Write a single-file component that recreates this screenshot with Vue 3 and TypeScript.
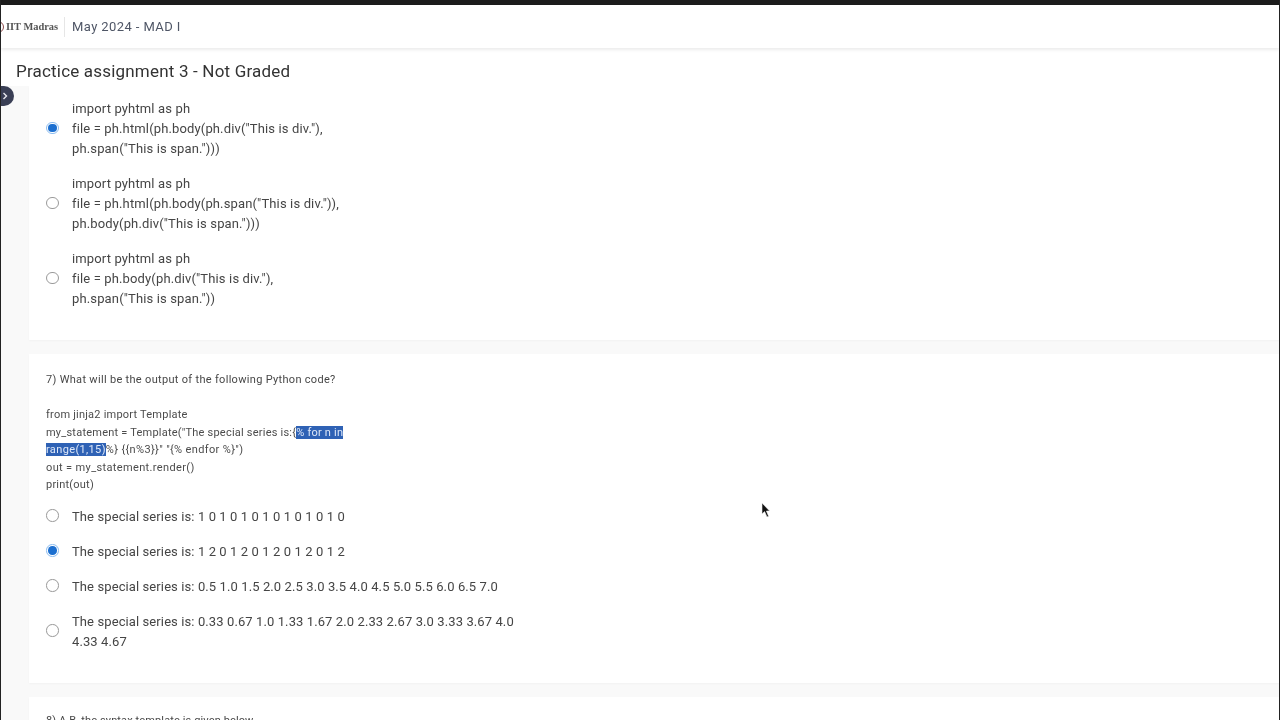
<script setup lang="ts">
interface Option { lines: string[]; checked?: boolean }
const first: Option[] = [
  { checked: true, lines: ['import pyhtml as ph', 'file = ph.html(ph.body(ph.div("This is div."),', 'ph.span("This is span.")))'] },
  { lines: ['import pyhtml as ph', 'file = ph.html(ph.body(ph.span("This is div.")),', 'ph.body(ph.div("This is span.")))'] },
  { lines: ['import pyhtml as ph', 'file = ph.body(ph.div("This is div."),', 'ph.span("This is span."))'] },
]
const second: Option[] = [
  { lines: ['The special series is: 1 0 1 0 1 0 1 0 1 0 1 0 1 0'] },
  { checked: true, lines: ['The special series is: 1 2 0 1 2 0 1 2 0 1 2 0 1 2'] },
  { lines: ['The special series is: 0.5 1.0 1.5 2.0 2.5 3.0 3.5 4.0 4.5 5.0 5.5 6.0 6.5 7.0'] },
  { lines: ['The special series is: 0.33 0.67 1.0 1.33 1.67 2.0 2.33 2.67 3.0 3.33 3.67 4.0', '4.33 4.67'] },
]
const codeTail = '%} {{n%3}}" "{% endfor %}")'
</script>

<template>
  <div class="page">
    <div class="topstrip"></div>
    <header class="header">
      <span class="logo-ring"></span>
      <span class="brand">IIT Madras</span>
      <span class="course">May 2024 - MAD I</span>
    </header>
    <h1 class="title">Practice assignment 3 - Not Graded</h1>
    <button class="toggle" aria-label="Open sidebar">
      <svg width="8" height="8" viewBox="0 0 8 8"><path d="M2.5 1 L5.5 4 L2.5 7" fill="none" stroke="#e8e8ee" stroke-width="1.4" /></svg>
    </button>
    <main class="content">
      <section class="card card-one">
        <div v-for="(o, i) in first" :key="i" class="option three">
          <span class="radio" :class="{ on: o.checked }"></span>
          <div class="label wide"><div v-for="l in o.lines" :key="l">{{ l }}</div></div>
        </div>
      </section>
      <section class="card card-two">
        <p class="question">7) What will be the output of the following Python code?</p>
        <div class="code">
          <div>from jinja2 import Template</div>
          <div>my_statement = Template("The special series is:{<mark>% for n in</mark></div>
          <div class="loose"><mark>range(1,15)</mark>{{ codeTail }}</div>
          <div class="loose">out = my_statement.render()</div>
          <div>print(out)</div>
        </div>
        <div class="answers">
          <div v-for="(o, i) in second" :key="i" class="option">
            <span class="radio" :class="{ on: o.checked }"></span>
            <div class="label"><div v-for="l in o.lines" :key="l">{{ l }}</div></div>
          </div>
        </div>
      </section>
      <section class="card card-three">
        <p class="question tight">8) A B, the syntax template is given below</p>
      </section>
    </main>
    <svg class="cursor" width="10" height="17" viewBox="0 0 10 17"><path d="M1 1 L1 12 L3.6 9.6 L6 15 L7.6 14.2 L5.4 9 L8.6 9 Z" fill="#111" stroke="#eee" stroke-width=".6" /></svg>
  </div>
</template>

<style>
html, body { margin: 0; background: #fff; }
</style>

<style scoped>
.page {
  position: relative;
  width: 1280px;
  height: 720px;
  overflow: hidden;
  background: #f9f9f9;
  border-left: 1px solid #222;
  border-right: 1px solid #222;
  box-sizing: border-box;
  font-family: Roboto, "Liberation Sans", sans-serif;
  color: #3a3a3a;
  filter: blur(0.35px);
}
.topstrip { height: 5px; background: #1c1c1c; }
.header {
  height: 43px;
  display: flex;
  align-items: center;
  background: #fff;
  box-shadow: 0 2px 3px rgba(0, 0, 0, .08);
  position: relative;
}
.logo-ring {
  flex: none;
  box-sizing: border-box;
  width: 12px;
  height: 12px;
  margin-left: -9px;
  border: 1.5px solid #8c4b4b;
  border-radius: 50%;
}
.brand {
  margin-left: 2px;
  padding-right: 6px;
  font: 700 10.4px/20px "Liberation Serif", serif;
  color: #555;
  border-right: 1px solid #e6e6e6;
}
.course { margin-left: 7px; font-size: 13px; letter-spacing: .4px; color: #4f5666; }
.title {
  margin: 0;
  height: 38px;
  padding: 12px 0 0 15px;
  box-sizing: border-box;
  font-weight: 400;
  font-size: 17px;
  line-height: 22px;
  letter-spacing: .19px;
  color: #333;
  background: #fff;
}
.toggle {
  position: absolute;
  left: -1px;
  top: 86px;
  width: 14px;
  height: 20px;
  border: 0;
  padding: 0 4px 0 0;
  border-radius: 0 10px 10px 0;
  background: #3a3f55;
  display: flex;
  align-items: center;
  justify-content: center;
}
.content { padding-left: 28px; display: flex; flex-direction: column; gap: 14px; }
.card { background: #fff; box-shadow: 0 1px 2px rgba(0, 0, 0, .03); margin-right: -1px; box-sizing: border-box; }
.card-one { height: 254px; padding-top: 13px; }
.card-two { height: 329px; padding: 17px 0 0 17px; }
.card-three { height: 60px; padding: 15px 0 0 17px; }
.option { display: flex; align-items: center; }
.three { padding-left: 17px; height: 60px; margin-bottom: 15px; }
.radio {
  flex: none;
  width: 10.5px;
  height: 10.5px;
  border: 1px solid #9a9a9a;
  border-radius: 50%;
  background: #fff;
  margin: 0 13.5px 2px 0;
  position: relative;
}
.radio.on { border-color: #8dbdf0; }
.radio.on::after {
  content: "";
  position: absolute;
  inset: 1px;
  border-radius: 50%;
  background: #1c6fd0;
}
.label { font-size: 13px; line-height: 20px; letter-spacing: .1px; color: #454545; }
.label.wide { letter-spacing: .14px; }
.question { margin: 0; font-size: 11px; line-height: 18px; letter-spacing: .31px; color: #474747; }
.question.tight { letter-spacing: .12px; }
.code { margin-top: 17px; font-size: 11px; line-height: 17.5px; letter-spacing: .22px; color: #4c4c4c; }
.code .loose { letter-spacing: .36px; }
mark { background: #2f62b5; color: #dfe8f8; }
.answers { margin-top: 13px; display: flex; flex-direction: column; gap: 15px; }
.answers .option { min-height: 20px; }
.cursor { position: absolute; left: 760px; top: 502px; }
</style>
